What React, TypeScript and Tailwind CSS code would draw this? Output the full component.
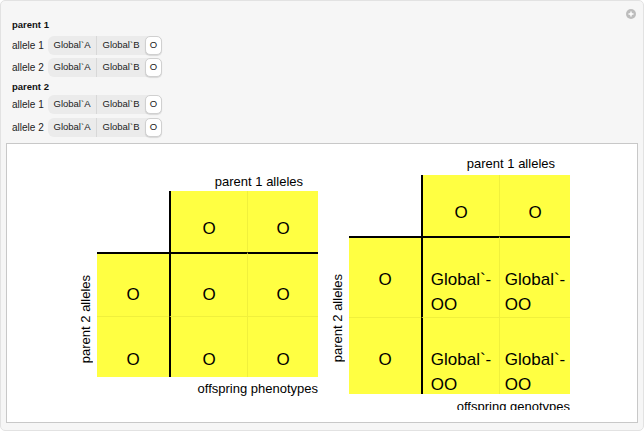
import React from "react";

const font = { fontFamily: '"Liberation Sans", Arial, sans-serif' };

const alleles = ["Global`A", "Global`B", "O"];

// One setter bar: label + segmented buttons, last one selected
const AlleleRow = ({ label }: { label: string }) => (
  <div className="flex items-center h-[18px]">
    <span className="w-[36px] text-[10px] text-[#222]">{label}</span>
    <div className="flex h-[19px] rounded-[6px] bg-[#ebebeb] text-[9.5px] text-[#222]">
      <div className="flex items-center w-[49px] justify-center border-r border-[#d8d8d8]">{alleles[0]}</div>
      <div className="flex items-center w-[48px] justify-center">{alleles[1]}</div>
      <div className="flex items-center w-[17px] justify-center bg-white rounded-[5px] border border-[#d0d0d0] shadow-[0_1px_1px_rgba(0,0,0,0.12)]">
        {alleles[2]}
      </div>
    </div>
  </div>
);

const Y = "bg-[#ffff42]";

const VLabel = ({ text, className }: { text: string; className: string }) => (
  <div className={className}>
    <span className="[writing-mode:vertical-rl] rotate-180 whitespace-nowrap text-[13px] leading-[15px]">{text}</span>
  </div>
);

const PhenoGrid = () => (
  <div className="mt-[27px] grid grid-cols-[19px_72px_78px_71px] grid-rows-[20px_61px_64px_61px_20px] text-black">
    <div className="col-start-2 col-span-3 flex items-center justify-end pr-[15px] text-[13px] leading-[15px]">parent 1 alleles</div>

    {/* row 1 */}
    <div className="col-start-2" />
    <div className={`${Y} border-l-2 border-black flex justify-center pt-[29px] text-[17px] leading-[18px]`}>O</div>
    <div className={`${Y} border-l border-[#f0f03c] flex justify-center pt-[29px] text-[17px] leading-[18px]`}>O</div>

    {/* row 2 */}
    <VLabel text="parent 2 alleles" className="row-span-2 flex items-center justify-center pt-[9px] pr-[5px]" />
    <div className={`${Y} border-t-2 border-black flex justify-center pt-[32px] text-[17px] leading-[18px]`}>O</div>
    <div className={`${Y} border-t-2 border-l-2 border-black flex justify-center pt-[32px] text-[17px] leading-[18px]`}>O</div>
    <div className={`${Y} border-t-2 border-t-black border-l border-l-[#f0f03c] flex justify-center pt-[32px] text-[17px] leading-[18px]`}>O</div>

    {/* row 3 */}
    <div className={`${Y} border-t border-[#f0f03c] flex justify-center pt-[34px] text-[17px] leading-[18px]`}>O</div>
    <div className={`${Y} border-l-2 border-l-black border-t border-t-[#f0f03c] flex justify-center pt-[34px] text-[17px] leading-[18px]`}>O</div>
    <div className={`${Y} border-l border-t border-[#f0f03c] flex justify-center pt-[34px] text-[17px] leading-[18px]`}>O</div>

    <div className="col-start-2 col-span-3 flex justify-end pt-[4px] text-[13px] leading-[15px]">offspring phenotypes</div>
  </div>
);

const Geno = () => (
  <div className="flex flex-col items-start">
    <span>Global`-</span>
    <span>OO</span>
  </div>
);

// clipped at the bottom like the reference pane
const GenoGrid = () => (
  <div className="mt-[12px] h-[254px] overflow-hidden">
    <div className="grid grid-cols-[19px_72px_78px_71px] grid-rows-[19px_61px_81px_77px_22px] text-black">
      <div className="col-start-2 col-span-3 flex items-start justify-end pr-[15px] text-[13px] leading-[15px]">parent 1 alleles</div>

      {/* row 1 */}
      <div className="col-start-2" />
      <div className={`${Y} border-l-2 border-black flex justify-center pt-[29px] text-[17px] leading-[18px]`}>O</div>
      <div className={`${Y} border-l border-[#f0f03c] flex justify-center pt-[29px] text-[17px] leading-[18px]`}>O</div>

      {/* row 2 */}
      <VLabel text="parent 2 alleles" className="row-span-2 flex items-center justify-center pt-[7px] pr-[5px]" />
      <div className={`${Y} border-t-2 border-black flex justify-center pt-[29px] text-[17px] leading-[25px]`}>O</div>
      <div className={`${Y} border-t-2 border-l-2 border-black flex justify-center pt-[29px] text-[17px] leading-[25px]`}><Geno /></div>
      <div className={`${Y} border-t-2 border-t-black border-l border-l-[#f0f03c] flex justify-center pt-[29px] text-[17px] leading-[25px]`}><Geno /></div>

      {/* row 3 */}
      <div className={`${Y} border-t border-[#f0f03c] flex justify-center pt-[29px] text-[17px] leading-[25px]`}>O</div>
      <div className={`${Y} border-l-2 border-l-black border-t border-t-[#f0f03c] flex justify-center pt-[29px] text-[17px] leading-[25px]`}><Geno /></div>
      <div className={`${Y} border-l border-t border-[#f0f03c] flex justify-center pt-[29px] text-[17px] leading-[25px]`}><Geno /></div>

      <div className="col-start-2 col-span-3 flex justify-end pt-[5px] text-[13px] leading-[15px]">offspring genotypes</div>
    </div>
  </div>
);

export default function App() {
  return (
    <div style={font} className="relative w-[644px] h-[431px] bg-[#f6f6f6] border border-[#e2e2e2] rounded-[5px] px-[5px] pt-[18px]">
      <div className="absolute right-[7px] top-[8px] w-[10px] h-[10px] rounded-full bg-[#bdbdbd] flex items-center justify-center">
        <svg width="6" height="6" viewBox="0 0 6 6">
          <path d="M3 0.5v5M0.5 3h5" stroke="white" strokeWidth="1.4" />
        </svg>
      </div>

      <div className="pl-[6px] flex flex-col">
        <div className="h-[12px] flex items-center text-[9.5px] font-bold text-[#111]">parent 1</div>
        <div className="mt-[5px]"><AlleleRow label="allele 1" /></div>
        <div className="mt-[4px]"><AlleleRow label="allele 2" /></div>
        <div className="mt-[5px] h-[12px] flex items-center text-[9.5px] font-bold text-[#111]">parent 2</div>
        <div className="mt-[2px]"><AlleleRow label="allele 1" /></div>
        <div className="mt-[5px]"><AlleleRow label="allele 2" /></div>
      </div>

      <div className="mt-[7px] h-[280px] bg-white border border-[#c8c8c8] flex items-start pl-[71px] gap-[12px]">
        <PhenoGrid />
        <GenoGrid />
      </div>
    </div>
  );
}
